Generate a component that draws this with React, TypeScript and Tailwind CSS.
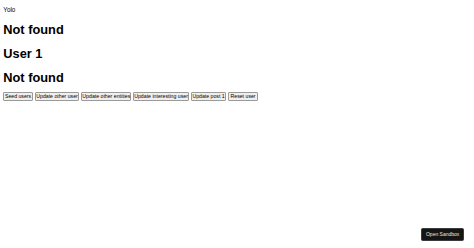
import React from 'react';

const actions: { label: string; width: string }[] = [
  { label: 'Seed users', width: 'w-[29.5px]' },
  { label: 'Update other user', width: 'w-[44.5px]' },
  { label: 'Update other entities', width: 'w-[50px]' },
  { label: 'Update interesting user', width: 'w-[55.5px]' },
  { label: 'Update post 1', width: 'w-[35.5px]' },
  { label: 'Reset user', width: 'w-[29.5px]' },
];

const App: React.FC = () => {
  return (
    <div className="relative w-[474px] h-[248px] bg-white overflow-hidden font-['Liberation_Sans',Arial,sans-serif] text-black">
      <div className="flex flex-col items-start px-[3.3px]">
        <p className="mt-[6.4px] text-[6.3px] leading-[7.3px]">Yolo</p>
        <h1 className="mt-[7.9px] text-[12.8px] leading-[15.3px] font-bold">Not found</h1>
        <h1 className="mt-[9px] text-[12.8px] leading-[15.3px] font-bold">User 1</h1>
        <h1 className="mt-[9px] text-[12.8px] leading-[15.3px] font-bold">Not found</h1>
        <div className="mt-[6.6px] flex items-start gap-[2px]">
          {actions.map((action) => (
            <button
              key={action.label}
              className={`${action.width} h-[9.3px] flex items-center justify-center whitespace-nowrap bg-[#efefef] border border-[#9a9a9a] rounded-[1px] text-[5.2px] leading-none text-black`}
            >
              {action.label}
            </button>
          ))}
        </div>
      </div>

      <button className="absolute right-[9.6px] bottom-[7.4px] w-[43.5px] h-[12.7px] flex items-center justify-center bg-[#151515] border border-[#3c3c3c] rounded-[1.6px] text-[5px] leading-none text-[#e8e8e8] whitespace-nowrap">
        Open Sandbox
      </button>
    </div>
  );
};

export default App;
